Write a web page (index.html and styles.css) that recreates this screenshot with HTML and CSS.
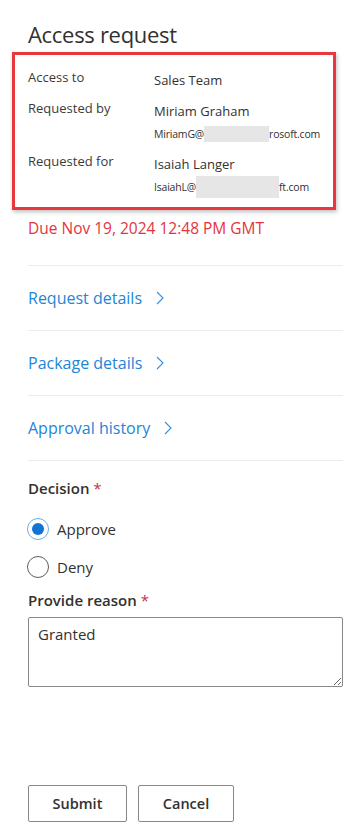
FILE: index.html
```html
<!DOCTYPE html>
<html lang="en">
<head>
<meta charset="utf-8">
<title>Access request</title>
<link rel="stylesheet" href="styles.css">
</head>
<body>
<main class="page">
  <h1 class="title">Access request</h1>

  <section class="info">
    <div class="row">
      <div class="label">Access to</div>
      <div class="value"><div class="name">Sales Team</div></div>
    </div>
    <div class="row">
      <div class="label">Requested by</div>
      <div class="value">
        <div class="name">Miriam Graham</div>
        <div class="email">MiriamG@<span class="redact r1"></span>rosoft.com</div>
      </div>
    </div>
    <div class="row">
      <div class="label">Requested for</div>
      <div class="value">
        <div class="name">Isaiah Langer</div>
        <div class="email">IsaiahL@<span class="redact r2"></span>ft.com</div>
      </div>
    </div>
  </section>

  <p class="due">Due Nov 19, 2024 12:48 PM GMT</p>

  <nav class="links">
    <a class="link" href="#">Request details <svg class="chev" viewBox="0 0 8 14" width="8" height="14"><path d="M1 1l6 6-6 6" fill="none" stroke="currentColor" stroke-width="1.1"/></svg></a>
    <a class="link" href="#">Package details <svg class="chev" viewBox="0 0 8 14" width="8" height="14"><path d="M1 1l6 6-6 6" fill="none" stroke="currentColor" stroke-width="1.1"/></svg></a>
    <a class="link" href="#">Approval history <svg class="chev" viewBox="0 0 8 14" width="8" height="14"><path d="M1 1l6 6-6 6" fill="none" stroke="currentColor" stroke-width="1.1"/></svg></a>
  </nav>

  <div class="field-label decision">Decision <span class="req">*</span></div>
  <div class="radios">
    <div class="radio"><span class="dot checked"></span>Approve</div>
    <div class="radio"><span class="dot"></span>Deny</div>
  </div>

  <div class="field-label reason">Provide reason <span class="req">*</span></div>
  <textarea class="textarea">Granted</textarea>

  <div class="actions">
    <button class="btn submit">Submit</button>
    <button class="btn cancel">Cancel</button>
  </div>
</main>
</body>
</html>
```
FILE: styles.css
```css
* { box-sizing: border-box; }
html, body { margin: 0; padding: 0; background: #fff; }
body {
  font-family: "Open Sans", "Noto Sans", "Liberation Sans", sans-serif;
  color: #323130;
}
.page {
  width: 360px;
  padding: 20px 17px 0 28px;
}
.title {
  margin: 0;
  font-size: 22px;
  line-height: 28px;
  font-weight: 400;
  color: #323130;
  letter-spacing: -0.3px;
}
.info {
  margin: 4px 7px 0 -16px;
  border: 3px solid #e9373e;
  box-shadow: 1px 2px 4px rgba(0,0,0,0.25);
  padding: 15px 8px 11px 13px;
  display: flex;
  flex-direction: column;
  gap: 11px;
}
.row {
  display: grid;
  grid-template-columns: 126px 1fr;
}
.label {
  font-size: 13px;
  line-height: 14px;
  color: #3b3a39;
}
.name {
  font-size: 13px;
  line-height: 20px;
  color: #323130;
}
.email {
  margin-top: 4px;
  height: 18px;
  font-size: 10.5px;
  line-height: 18px;
  color: #323130;
  display: flex;
  align-items: center;
  letter-spacing: -0.2px;
}
.redact {
  display: inline-block;
  flex: none;
  background: #e6e6e6;
}
.r1 { width: 65px; height: 16px; }
.r2 { width: 83px; height: 22px; }
.due {
  margin: 8px 0 0;
  font-size: 15.5px;
  line-height: 20px;
  color: #e8323c;
}
.links {
  margin-top: 27px;
  border-top: 1px solid #ececec;
  display: flex;
  flex-direction: column;
}
.link {
  height: 65px;
  border-bottom: 1px solid #ececec;
  display: flex;
  align-items: center;
  gap: 14px;
  font-size: 16px;
  color: #2285d8;
  text-decoration: none;
}
.chev { color: #3a8fdb; }
.field-label {
  font-size: 15px;
  line-height: 20px;
  font-weight: 600;
  color: #323130;
}
.req { color: #c4314b; font-weight: 400; }
.decision { margin-top: 17px; }
.radios { margin-top: 12px; display: flex; flex-direction: column; }
.radio {
  height: 38px;
  display: flex;
  align-items: center;
  gap: 8px;
  font-size: 15px;
  color: #323130;
}
.dot {
  width: 22px;
  height: 22px;
  border-radius: 50%;
  border: 1.5px solid #605e5c;
  display: flex;
  align-items: center;
  justify-content: center;
  margin-left: -1px;
}
.dot.checked { border-color: #6aaee8; }
.dot.checked::after {
  content: "";
  width: 12px;
  height: 12px;
  border-radius: 50%;
  background: #0f74d4;
}
.reason { margin-top: 4px; }
.textarea {
  display: block;
  margin-top: 7px;
  width: 315px;
  height: 70px;
  border: 1px solid #8a8886;
  border-radius: 2px;
  padding: 6px 9px;
  font-family: inherit;
  font-size: 15px;
  line-height: 20px;
  color: #323130;
  resize: both;
}
.actions {
  margin-top: 98px;
  display: flex;
  gap: 11px;
}
.btn {
  height: 37px;
  border: 1px solid #8a8886;
  border-radius: 2px;
  background: #fff;
  font-family: inherit;
  font-size: 14.5px;
  font-weight: 600;
  color: #323130;
  padding: 0;
}
.submit { width: 99px; }
.cancel { width: 96px; }
```
